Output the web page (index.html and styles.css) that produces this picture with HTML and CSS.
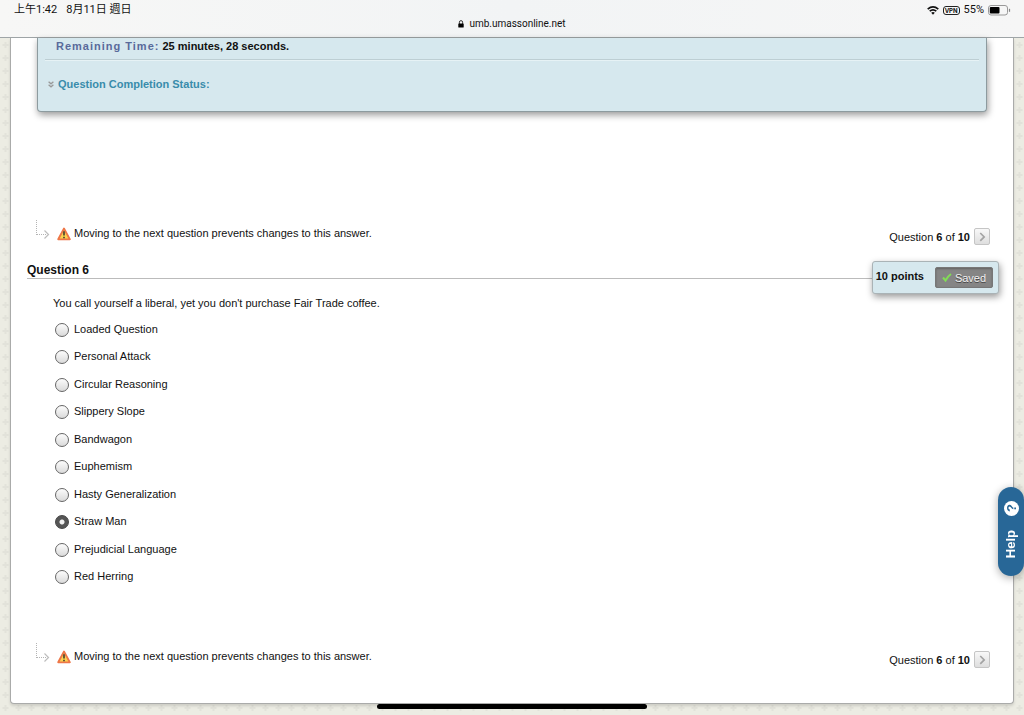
FILE: index.html
```html
<!DOCTYPE html>
<html lang="en">
<head>
<meta charset="utf-8">
<title>Question 6</title>
<link rel="stylesheet" href="styles.css">
</head>
<body>
<svg class="sprite" aria-hidden="true">
  <symbol id="arrow" viewBox="0 0 14 20">
    <path d="M.5 0v16" fill="none" stroke="#b4b4b4" stroke-dasharray="1 1"/>
    <path d="M1 14.500h10" fill="none" stroke="#b4b4b4" stroke-dasharray="1 1"/>
    <path d="M8.500 10.500l4 4-4 4" fill="none" stroke="#bdbdbd" stroke-width="1.200"/>
  </symbol>
  <symbol id="warning" viewBox="0 0 14 14">
    <path d="M7 1.500L12.800 12.300H1.200z" fill="#fbd34f" stroke="#ee7647" stroke-width="1.800" stroke-linejoin="round"/>
    <path d="M7 4.300v4.200M7 9.700v1.600" stroke="#35322e" stroke-width="1.500"/>
  </symbol>
  <symbol id="chevron" viewBox="0 0 16 16">
    <path d="M6 4L10.500 8.500 6 13" fill="none" stroke="#a3a3a3" stroke-width="1.900"/>
  </symbol>
</svg>

<header class="browser">
  <div class="status">
    <div class="clock"><span>上午1:42</span><span>8月11日 週日</span></div>
    <div class="indicators">
      <svg class="wifi" viewBox="0 0 12 9" aria-label="Wi-Fi"><path d="M.7 3.200Q6-1.300 11.300 3.200M2.700 5.200Q6 2.400 9.300 5.200" fill="none" stroke="#111" stroke-width="1.700"/><path d="M4.200 6.800Q6 5.400 7.800 6.800L6 8.700z" fill="#111"/></svg>
      <span class="vpn">VPN</span>
      <span class="percent">55%</span>
      <svg class="battery" viewBox="0 0 23 11" aria-label="Battery"><rect x=".5" y=".5" width="19" height="9.500" rx="2.500" fill="none" stroke="#999"/><rect x="1.800" y="2" width="9.700" height="6.500" rx="1" fill="#000"/><path d="M21.500 3.800v3" stroke="#888" stroke-width="1.200"/></svg>
    </div>
  </div>
  <div class="address">
    <svg class="lock" viewBox="0 0 6 8" aria-hidden="true"><path d="M1.400 4V2.200a1.600 1.600 0 0 1 3.200 0V4" fill="none" stroke="#222" stroke-width=".9"/><rect x=".3" y="3.400" width="5.400" height="4.200" rx=".6" fill="#000"/></svg>
    <span>umb.umassonline.net</span>
  </div>
</header>

<main class="panel">
  <section class="timer">
    <p class="remaining"><span class="remaining-label">Remaining Time:</span> <strong>25 minutes, 28 seconds.</strong></p>
    <a class="completion" href="#status"><svg class="double" viewBox="0 0 6 7" aria-hidden="true"><path d="M.6.800L3 2.800 5.400.800M.6 3.800L3 5.800l2.400-2" fill="none" stroke="#999" stroke-width="1.300"/></svg>Question Completion Status:</a>
  </section>

  <nav class="mover mover-top">
    <svg class="arrow"><use href="#arrow"/></svg>
    <svg class="warning"><use href="#warning"/></svg>
    <p class="notice">Moving to the next question prevents changes to this answer.</p>
    <span class="position">Question <b>6</b> of <b>10</b></span>
    <button class="next" type="button" aria-label="Next question"><svg><use href="#chevron"/></svg></button>
  </nav>

  <div class="question-head">
    <h1>Question 6</h1>
    <div class="points"><strong>10 points</strong>
      <button class="saved" type="button"><svg viewBox="0 0 10 9" aria-hidden="true"><path d="M1 4.500l2.500 3Q5.500 3.500 9 1" fill="none" stroke="#82dc55" stroke-width="2"/></svg>Saved</button>
    </div>
  </div>

  <fieldset class="answers">
    <legend>You call yourself a liberal, yet you don't purchase Fair Trade coffee.</legend>
    <div class="options">
      <label><input type="radio" name="answer"><span>Loaded Question</span></label>
      <label><input type="radio" name="answer"><span>Personal Attack</span></label>
      <label><input type="radio" name="answer"><span>Circular Reasoning</span></label>
      <label><input type="radio" name="answer"><span>Slippery Slope</span></label>
      <label><input type="radio" name="answer"><span>Bandwagon</span></label>
      <label><input type="radio" name="answer"><span>Euphemism</span></label>
      <label><input type="radio" name="answer"><span>Hasty Generalization</span></label>
      <label><input type="radio" name="answer" checked><span>Straw Man</span></label>
      <label><input type="radio" name="answer"><span>Prejudicial Language</span></label>
      <label><input type="radio" name="answer"><span>Red Herring</span></label>
    </div>
  </fieldset>

  <nav class="mover mover-bottom">
    <svg class="arrow"><use href="#arrow"/></svg>
    <svg class="warning"><use href="#warning"/></svg>
    <p class="notice">Moving to the next question prevents changes to this answer.</p>
    <span class="position">Question <b>6</b> of <b>10</b></span>
    <button class="next" type="button" aria-label="Next question"><svg><use href="#chevron"/></svg></button>
  </nav>
</main>

<button class="help" type="button">
  <span class="help-text">Help</span><span class="help-mark">?</span>
</button>
<div class="home-bar"></div>
</body>
</html>
```
FILE: styles.css
```css
* { box-sizing: border-box; }

body {
  margin: 0;
  min-height: 100vh;
  display: flex;
  flex-direction: column;
  font: 11px/16px "Liberation Sans", Arial, sans-serif;
  color: #111;
  background-color: #ecece3;
  background-image: url("data:image/svg+xml,%3Csvg xmlns='http://www.w3.org/2000/svg' width='13' height='13'%3E%3Cpath d='M5.500 3v6M2.500 6h6' stroke='%23e2e2da' stroke-width='2'/%3E%3C/svg%3E");
}

p, h1 { margin: 0; }
button { font: inherit; padding: 0; cursor: pointer; }
svg { display: block; flex: none; }
.sprite { display: none; }

.browser {
  height: 38px;
  flex: none;
  background: linear-gradient(90deg, #f7f7f6, #f2f4f5 50%, #f6f6f6);
  border-bottom: 1px solid #9fa5a7;
}
.status {
  display: flex;
  justify-content: space-between;
  padding: 2px 14px 0;
}
.clock {
  display: flex;
  gap: 9px;
  font: 11px/16px Roboto, "Noto Sans CJK TC", sans-serif;
}
.indicators { display: flex; align-items: center; gap: 4px; }
.wifi { width: 12px; height: 9px; }
.vpn {
  border: 1px solid #222;
  border-radius: 3px;
  padding: 0 1px;
  font: bold 6px/7px Inter, sans-serif;
}
.percent { font: 11px/16px Roboto, sans-serif; }
.battery { width: 23px; height: 11px; margin-right: -1px; }
.address {
  display: flex;
  justify-content: center;
  align-items: center;
  gap: 5px;
  font: 10px/12px Roboto, sans-serif;
}
.lock { width: 6px; height: 8px; }

.panel {
  flex: 1;
  margin: 0 10px 11px;
  background: #fff;
  border: 1px solid #aaabaa;
  border-top: 0;
  border-radius: 0 0 4px 4px;
  box-shadow: 0 2px 3px #0002;
}

.timer {
  margin: 0 26px;
  padding: 0 7px 19px;
  background: #d6e8ee;
  border: 1px solid #8d9b9f;
  border-top: 0;
  border-radius: 0 0 4px 4px;
  box-shadow: 1px 3px 7px #0006;
}
.remaining {
  padding: 0 0 5px 11px;
  border-bottom: 1px solid #bdced3;
  box-shadow: 0 1px #e6f2f5;
}
.remaining-label { color: #596a9b; font-weight: bold; letter-spacing: 1px; }
.completion {
  display: flex;
  align-items: center;
  gap: 4px;
  width: max-content;
  padding: 16px 0 0 3px;
  color: #398cab;
  font-weight: bold;
  text-decoration: none;
}
.double { width: 6px; height: 7px; }

.mover {
  display: flex;
  align-items: center;
  padding: 0 23px 0 25px;
}
.mover-top { margin-top: 102px; }
.mover-bottom { margin-top: 46px; }
.arrow { width: 14px; height: 20px; margin-right: 7px; }
.warning { width: 14px; height: 14px; margin: 8px 3px 0 0; }
.notice { flex: 1; padding-top: 6px; }
.position { padding-top: 14px; margin-right: 4px; }
.next {
  width: 16px;
  height: 17px;
  margin-top: 14px;
  border: 1px solid #c5c5c5;
  border-radius: 2px;
  background: linear-gradient(#f8f8f8, #dedede);
}
.next svg { width: 14px; height: 15px; }

.question-head {
  display: flex;
  align-items: flex-start;
  margin-top: 16px;
  padding: 0 14px 0 16px;
}
h1 {
  flex: 1;
  padding-top: 1px;
  border-bottom: 1px solid #bbb;
  font-size: 12px;
  line-height: 16px;
}
.points {
  display: flex;
  align-items: center;
  gap: 11px;
  height: 33px;
  padding: 0 5px 0 3px;
  background: #d6e8ee;
  border: 1px solid #aab3b6;
  border-radius: 3px;
  box-shadow: 1px 3px 7px #0006;
}
.points strong { padding-bottom: 3px; }
.saved {
  display: flex;
  align-items: center;
  justify-content: center;
  gap: 3px;
  width: 58px;
  height: 21px;
  color: #f2f2f2;
  text-shadow: 0 1px #444;
  background: #858585;
  border: 1px solid #777;
  border-radius: 2px;
  box-shadow: inset 0 1px 2px #0004;
}
.saved svg { width: 10px; height: 9px; }

.answers { min-width: 0; margin: 0; padding: 0 42px; border: 0; }
legend { padding: 1px 0 5px; }
.options {
  display: grid;
  grid-auto-rows: 1fr;
  min-height: 275px;
}
.options label {
  display: flex;
  align-items: center;
  width: max-content;
  padding-left: 2px;
  gap: 5px;
}
.options span { padding-bottom: 2px; }
.options input {
  appearance: none;
  width: 14px;
  height: 14px;
  margin: 0;
  border: 1px solid #666;
  border-radius: 50%;
  background: linear-gradient(#fcfcfc, #dadada);
}
.options input:checked {
  border-color: #444;
  background: radial-gradient(circle, #f2f2f2 0 2px, #555 3px);
}

.help {
  position: fixed;
  top: 487px;
  right: 0;
  display: flex;
  flex-direction: column-reverse;
  align-items: center;
  justify-content: center;
  gap: 14px;
  width: 26px;
  height: 89px;
  padding: 0 0 3px;
  color: #fff;
  background: #286797;
  border: 0;
  border-radius: 13px;
  box-shadow: 0 2px 8px #0005;
  font: bold 13px/14px "Liberation Sans", Arial, sans-serif;
}
.help-text, .help-mark { writing-mode: vertical-rl; rotate: 180deg; }
.help-mark {
  display: flex;
  align-items: center;
  justify-content: center;
  width: 15px;
  height: 15px;
  color: #286797;
  background: #fff;
  border-radius: 50%;
}
.home-bar {
  position: fixed;
  left: 50%;
  bottom: 6px;
  width: 270px;
  height: 5px;
  margin-left: -135px;
  border-radius: 3px;
  background: #000;
}
```
